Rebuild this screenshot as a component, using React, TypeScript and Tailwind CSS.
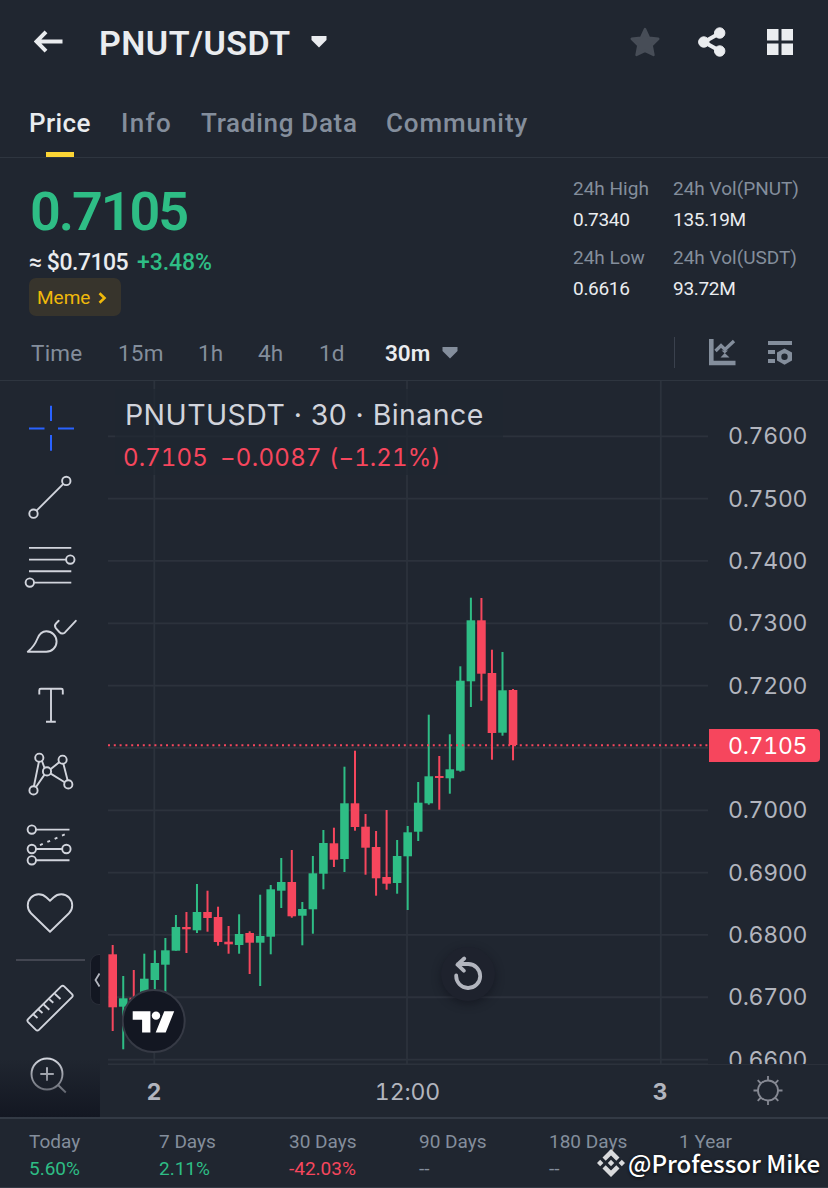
import { useState } from 'react';
import type { ReactNode } from 'react';

interface Candle {
  open: number;
  close: number;
  high: number;
  low: number;
  up: boolean;
}

// body top, body bottom, wick top, wick bottom (chart pixels)
const RAW: [number, number, number, number, 0 | 1][] = [
  [954.3, 1007.3, 945, 1031, 0],
  [998.3, 1006.7, 976, 1049.3, 1],
  [997.7, 1000, 970, 1004, 0],
  [978.7, 998, 953.7, 1004, 1],
  [963, 980, 950.3, 995, 1],
  [950.3, 964.7, 938, 995, 1],
  [927, 950.7, 915, 950.7, 1],
  [927, 929.3, 912, 953, 0],
  [912, 930.3, 884, 933, 1],
  [912, 918, 890.7, 931.7, 0],
  [917, 942, 906.7, 945.7, 0],
  [941.7, 944.3, 926, 953.7, 0],
  [934, 945, 914.3, 953.7, 1],
  [933, 942.7, 931.3, 974, 0],
  [936, 942.7, 894.7, 986, 1],
  [889.3, 936.7, 885, 954.3, 1],
  [882, 890.7, 858, 908, 1],
  [882, 916.3, 850, 917.7, 0],
  [909, 915.7, 902, 945.3, 1],
  [873.3, 909.3, 856, 933.7, 1],
  [843, 873.7, 830, 889.3, 1],
  [843.3, 859.7, 827.7, 867, 0],
  [803.3, 859, 766.7, 872, 1],
  [803.3, 827, 750.7, 830.7, 0],
  [826.7, 847.7, 814, 874.7, 0],
  [847, 878.3, 831, 895.7, 0],
  [877, 883.7, 810, 889.7, 0],
  [856, 883, 840, 893.7, 1],
  [832.3, 856.3, 826, 910, 1],
  [802.7, 831.7, 782, 841, 1],
  [776.3, 803.3, 714.7, 804.7, 1],
  [776, 778, 756, 809.7, 0],
  [769.3, 778.3, 734.3, 793.7, 1],
  [680.7, 770.7, 666.3, 771.7, 1],
  [620.3, 681.3, 597.7, 707, 1],
  [620.3, 673.7, 598, 700.7, 0],
  [673, 733, 649.7, 759.7, 0],
  [690.3, 732.7, 652, 735.7, 1],
  [690, 745, 689, 760.3, 0],
];

const CANDLES: Candle[] = RAW.map(([open, close, high, low, up]) => ({ open, close, high, low, up: up === 1 }));

const TABS = [
  { label: 'Price', style: 'w-[92px] tracking-[0.4px]' },
  { label: 'Info', style: 'w-[80px] tracking-[1.3px]' },
  { label: 'Trading Data', style: 'w-[185px] tracking-[0.7px]' },
  { label: 'Community', style: 'w-[150px] tracking-[0.9px]' },
];

const INTERVALS = [
  { label: 'Time', style: 'w-[87px]' },
  { label: '15m', style: 'w-[80px]' },
  { label: '1h', style: 'w-[60px]' },
  { label: '4h', style: 'w-[61px]' },
  { label: '1d', style: 'w-[66px]' },
];

const STATS = [
  { label: '24h High', value: '0.7340' },
  { label: '24h Vol(PNUT)', value: '135.19M' },
  { label: '24h Low', value: '0.6616' },
  { label: '24h Vol(USDT)', value: '93.72M' },
];

const PRICES = ['0.7600', '0.7500', '0.7400', '0.7300', '0.7200', '', '0.7000', '0.6900', '0.6800', '0.6700', '0.6600'];

const RETURNS = [
  { label: 'Today', value: '5.60%', color: 'text-[#2ebd85]' },
  { label: '7 Days', value: '2.11%', color: 'text-[#2ebd85]' },
  { label: '30 Days', value: '-42.03%', color: 'text-[#f6465d]' },
  { label: '90 Days', value: '--', color: 'text-[#848e9c]' },
  { label: '180 Days', value: '--', color: 'text-[#848e9c]' },
  { label: '1 Year', value: '--', color: 'text-[#848e9c]' },
];

function Tool({ children }: { children: ReactNode }) {
  return (
    <svg
      className="block h-[69.4px] w-[100px] shrink-0"
      viewBox="0 0 100 69.4"
      fill="none"
      stroke="#d1d4dc"
      strokeWidth={1.9}
      strokeLinejoin="round"
    >
      {children}
    </svg>
  );
}

function Toolbar() {
  return (
    <div className="relative flex w-[100px] shrink-0 flex-col overflow-hidden pt-[12.3px]">
      <Tool>
        <path stroke="#2962ff" strokeWidth={2} d="M51 12.7V28M51 42V57.7M29 35.4H44.5M58 35.4H74" />
      </Tool>
      <Tool>
        <circle cx="66.3" cy="17.9" r="4.2" />
        <circle cx="33.5" cy="50.7" r="4.2" />
        <path d="M36.5 47.7 63.3 20.9" />
      </Tool>
      <Tool>
        <path d="M29 15.9H71.3M29 27.6H66M29 39.2H71.3M34 50.6H71.3" />
        <circle cx="70.3" cy="27.6" r="4.2" />
        <circle cx="29.8" cy="50.6" r="4.2" />
      </Tool>
      <Tool>
        <path d="M27.8 50.8C33 46.5 35.7 42 37.5 37.5 39.3 33 42.3 30.2 46.3 30.2a10.3 10.3 0 0 1 0 20.6Z" />
        <path strokeLinecap="round" d="M58.7 19.8 56.2 22.2Q53.8 24.6 56 27.3L59.3 31Q62 33.8 65 31.4L75.8 19.8" />
      </Tool>
      <Tool>
        <path d="M39.3 23.4V19.3q0-1.5 1.5-1.5H61.3q1.5 0 1.5 1.5V23.4M51 17.8V50.8M46 50.8H55.8" />
      </Tool>
      <Tool>
        <path d="M38.9 21.8 33.9 46.3M42 21 44.6 28.3M44.5 34.6 36 47M50.5 29.2 59.2 22.2M63.4 23.8 67.6 40.2M50.7 33.6 64.7 42.2" />
        <circle cx="39.3" cy="17.7" r="4.1" />
        <circle cx="62.6" cy="19.7" r="4.1" />
        <circle cx="47" cy="31.4" r="4.1" />
        <circle cx="68.3" cy="44.4" r="4.1" />
        <circle cx="33.5" cy="50.4" r="4.1" />
      </Tool>
      <Tool>
        <path d="M36 19.6H69.5M36 39H62M36 50.3H69.5" />
        <path strokeDasharray="3 5" d="M40 35.2 67 23.4" />
        <circle cx="31.8" cy="19.6" r="4.2" />
        <circle cx="31.8" cy="39" r="4.2" />
        <circle cx="66.4" cy="39" r="4.2" />
        <circle cx="31.8" cy="50.3" r="4.2" />
      </Tool>
      <Tool>
        <path d="M50 21.8 46.5 18.5C42 14.2 35.3 14.2 31 18.5 26.7 23 26.7 30 31 34.3L50 52.7 69 34.3C73.3 30 73.3 23 69 18.5 64.7 14.2 58 14.2 53.5 18.5Z" />
      </Tool>
      <div className="mx-[15.5px] mt-[11px] mb-[11.5px] h-[2px] shrink-0 bg-[#434651]" />
      <Tool>
        <path d="M61.2 13.4Q62.7 12 64.2 13.4L72 21.2Q73.4 22.7 72 24.2L38.9 56.9Q37.4 58.3 35.9 56.9L28.1 49.1Q26.7 47.6 28.1 46.1Z" />
        <path d="M33.5 41.5 37.5 45M38.5 36.5 42.5 40M43.7 31.5 49.3 36.7M49.3 26.3 53.3 29.8M54.8 20.8 60.5 26" />
      </Tool>
      <Tool>
        <circle cx="47" cy="32" r="15.5" />
        <path d="M58.3 43.3 65.8 50.5M47 25.3V38.8M40.3 32H53.8" />
      </Tool>
      <div className="absolute bottom-0 left-0 h-[58px] w-full bg-gradient-to-b from-transparent to-[#131722]" />
      <div className="absolute top-[573px] right-0 flex h-[51px] w-[10px] items-center justify-end rounded-l-[9px] border border-r-0 border-[#2a2e39] bg-[#131722]">
        <svg className="h-4 w-[6px]" viewBox="0 0 6 16" fill="none" stroke="#b2b5be" strokeWidth={1.8}>
          <path d="M5.5 1.5 1.5 8 5.5 14.5" />
        </svg>
      </div>
    </div>
  );
}

function CandleChart() {
  return (
    <svg className="block h-[684px] w-[608px]" viewBox="100 381 608 684">
      <g stroke="#2c323c" strokeWidth={1.8}>
        {PRICES.map((_, i) => (
          <path key={i} d={`M108 ${436.3 + i * 62.33}H708`} />
        ))}
        <path d="M154.3 381V1064M407 381V1064M660.8 381V1064" />
        <path d="M108 1064.3H708" />
      </g>
      {CANDLES.map((c, i) => {
        const x = 112.7 + i * 10.535;
        return (
          <g key={i} fill={c.up ? '#2ebd85' : '#f6465d'}>
            <rect x={x - 1} y={c.high} width={2} height={c.low - c.high} />
            <rect x={x - 4.3} y={c.open} width={8.6} height={c.close - c.open} />
          </g>
        );
      })}
      <path d="M108 745.2H708" stroke="#f6465d" strokeWidth={2} strokeDasharray="2 3.8" />
    </svg>
  );
}

function PriceAxis() {
  return (
    <div className="relative h-[684px] w-[120px] overflow-hidden border-b border-[#2b303a] pt-[24.4px] text-[23px] tracking-[-0.25px] text-[#b2b5be] tabular-nums">
      {PRICES.map((price, i) => (
        <div key={i} className="flex h-[62.33px] items-center pl-[20px]">
          {price}
        </div>
      ))}
      <div className="absolute top-[348px] left-px flex h-[33px] w-[111px] items-center rounded-r-[4px] bg-[#f6465d] pt-px pl-[19px] text-white">
        0.7105
      </div>
    </div>
  );
}

export default function App() {
  const [tab, setTab] = useState('Price');

  return (
    <div className="h-[1188px] w-[828px] overflow-hidden bg-[#202630] font-['Roboto',sans-serif] text-[#eaecef]">
      <header className="flex h-[86px] items-center px-[34px] pb-[2px]">
        <svg className="h-[24px] w-[30px]" viewBox="0 0 30 24" fill="none" stroke="#eaecef" strokeWidth={4}>
          <path d="M12 1.8 2.5 11.5 12 21.2M2.5 11.5H28.5" />
        </svg>
        <h1 className="ml-[35px] w-[212px] pt-[3px] text-[34px] font-semibold tracking-[0.5px] whitespace-nowrap">PNUT/USDT</h1>
        <svg className="h-[12px] w-[16px]" viewBox="0 0 16 12" fill="#eaecef">
          <path d="M.5 0H15.5V4L8 11.5.5 4Z" />
        </svg>
        <svg className="ml-auto h-[30px] w-[30px]" viewBox="0 0 30 30" fill="#474d57" stroke="#474d57" strokeWidth={2.4} strokeLinejoin="round">
          <path d="m15 2 4 8.7 9.3 1.1-6.6 6.7 1.8 9.5L15 23.8 6.5 28l1.8-9.5L1.7 11.8 11 10.7Z" />
        </svg>
        <svg className="ml-[38px] h-[30px] w-[28px]" viewBox="0 0 28 30" fill="#eaecef" stroke="#eaecef">
          <path d="M22 6 6 15 22 24" fill="none" strokeWidth={4} />
          <circle cx="21.7" cy="6" r="5.2" />
          <circle cx="5.8" cy="15" r="5.2" />
          <circle cx="21.7" cy="24" r="5.2" />
        </svg>
        <svg className="mr-px ml-[41px] h-[26px] w-[26px]" viewBox="0 0 26 26" fill="#eaecef">
          <path d="M0 0h11.5v11.5H0zM14.5 0H26v11.5H14.5zM0 14.5h11.5V26H0zM14.5 14.5H26V26H14.5z" />
        </svg>
      </header>

      <nav className="flex h-[72px] border-b border-[#2e353f] pl-[29px] text-[26px] font-medium">
        {TABS.map(({ label, style }) => (
          <button key={label} onClick={() => setTab(label)} className="flex flex-col text-left whitespace-nowrap">
            <span className={`${style} block h-[66px] pt-[18px] leading-[38px] ${tab === label ? 'text-[#eaecef]' : 'text-[#848e9c]'}`}>
              {label}
            </span>
            {tab === label && <span className="ml-[17px] h-[5px] w-[28px] bg-[#fcd535]" />}
          </button>
        ))}
      </nav>

      <section className="flex h-[168px] pl-[29px]">
        <div className="w-[544px] pt-[22px]">
          <div className="h-[64px] pl-px text-[54px] leading-[63px] font-semibold tracking-[-2.1px] text-[#2ebd85]">0.7105</div>
          <div className="flex h-[34px] items-center pt-[4px] text-[23px] font-medium whitespace-nowrap">
            <span className="w-[108px] tracking-[-0.5px]">≈ $0.7105</span>
            <span className="tracking-[-0.1px] text-[#2ebd85]">+3.48%</span>
          </div>
          <div className="flex h-[38px] w-[92px] items-center rounded-[7px] bg-[#37342c] pt-px pl-[8px] text-[19px] text-[#f0b90b]">
            <span className="w-[61px] pt-px">Meme</span>
            <svg className="h-[12px] w-[9px]" viewBox="0 0 9 12" fill="none" stroke="#f0b90b" strokeWidth={2.6}>
              <path d="M1.5 1.2 6.5 6 1.5 10.8" />
            </svg>
          </div>
        </div>
        <div className="grid h-[139px] grid-cols-[100px_140px] grid-rows-[69px_69px] pt-[15px] text-[19px]">
          {STATS.map((stat) => (
            <div key={stat.label} className="whitespace-nowrap">
              <div className="h-[31px] leading-[31px] text-[#848e9c]">{stat.label}</div>
              <div className="h-[31px] leading-[31px] tracking-[-0.3px]">{stat.value}</div>
            </div>
          ))}
        </div>
      </section>

      <div className="flex h-[55px] items-center border-b border-[#2e353f] pl-[31px] text-[22.5px] text-[#848e9c]">
        {INTERVALS.map(({ label, style }) => (
          <span key={label} className={`${style} pt-px tracking-[0.2px]`}>{label}</span>
        ))}
        <span className="w-[57px] pt-px font-semibold text-[#eaecef]">30m</span>
        <svg className="h-[12px] w-[16px]" viewBox="0 0 16 12" fill="#848e9c">
          <path d="M.5 0H15.5V4L8 11.5.5 4Z" />
        </svg>
        <div className="mb-px ml-auto h-[31px] w-px bg-[#3a414d]" />
        <svg className="mb-px ml-[34px] h-[27px] w-[27px]" viewBox="0 0 27 27">
          <path d="M2.3 0V24H26.5" fill="none" stroke="#848e9c" strokeWidth={4.6} />
          <path d="M6.5 12 12 6.5 16 10.5 25 2" fill="none" stroke="#848e9c" strokeWidth={3.3} />
          <path d="M12.5 11.5H19L16 14.3 20.5 18.5H11.5L15.5 14.3Z" fill="#848e9c" />
        </svg>
        <svg className="mr-[35px] mb-[2px] ml-[32px] h-[27px] w-[25px]" viewBox="0 0 25 27" fill="#848e9c">
          <path d="M0 2H24V6H0zM0 11H7V15H0zM0 20H7V24H0z" />
          <path fillRule="evenodd" d="m16.5 9.5 7.5 4v8l-7.5 4.3L9 21.5v-8Zm0 5a3.2 3.2 0 1 0 0 6.4 3.2 3.2 0 0 0 0-6.4Z" />
        </svg>
      </div>

      <main className="flex h-[736px] font-['Inter',sans-serif]">
        <Toolbar />
        <div className="w-[728px]">
          <div className="relative flex">
            <CandleChart />
            <PriceAxis />
            <div className="absolute top-[8px] left-[15px] flex w-[388px] flex-col whitespace-nowrap">
              <div className="h-[50px] bg-[#202630]/70 pl-[10px] text-[28.5px] leading-[51px] tracking-[0.42px] text-[#d1d4dc]">
                PNUTUSDT · 30 · Binance
              </div>
              <div className="flex h-[36px] w-[333px] bg-[#202630]/70 pt-px pl-[8px] text-[24px] leading-[36px] tracking-[0.1px] text-[#f6465d] tabular-nums">
                <span className="w-[97px]">0.7105</span>
                <span className="w-[109px] tracking-[0.3px]">−0.0087</span>
                <span>(−1.21%)</span>
              </div>
            </div>
            <svg className="absolute top-[608px] left-[22px] h-[64px] w-[64px]" viewBox="122 989 64 64" fill="#fff">
              <circle cx="153.7" cy="1021" r="31" fill="#131722" stroke="#363a45" strokeWidth={2} />
              <path d="M132.7 1011.2h17.7v21.3h-8.3v-12.8h-9.4zM164.3 1011.2H174.2L165.7 1032.5H155.7Z" />
              <circle cx="156" cy="1015.6" r="4.2" />
            </svg>
            <button className="absolute top-[566px] left-[341px] flex h-[54px] w-[54px] items-center justify-center rounded-full bg-[#1e222d] shadow-[0_3px_8px_rgba(15,17,26,0.55)]">
              <svg className="h-[36px] w-[32px]" viewBox="0 0 32 36" fill="none" stroke="#b2b5be" strokeWidth={3.8} strokeLinecap="round">
                <path d="M4.2 19.5a12 12 0 1 0 12-11.5H6M12.2 2.5 5.5 8.7 11.8 14.7" strokeLinejoin="round" />
              </svg>
            </button>
          </div>
          <div className="flex h-[52px] items-center text-[23px] text-[#b2b5be]">
            <span className="w-[108px] pt-[2px] text-center font-bold">2</span>
            <span className="w-[399px] pt-[2px] text-center tracking-[-0.1px] tabular-nums">12:00</span>
            <span className="w-[106px] pt-[2px] text-center font-bold">3</span>
            <svg className="ml-[39px] h-[32px] w-[32px]" viewBox="-16 -15.5 32 32" fill="none" stroke="#868993" strokeWidth={1.8}>
              <circle r="10" />
              <path d="M0-10V-14.5M0 10V14.5M-10 0H-14.5M10 0H14.5M7-7 10.3-10.3M7 7 10.3 10.3M-7 7-10.3 10.3M-7-7-10.3-10.3" />
            </svg>
          </div>
        </div>
      </main>

      <footer className="relative flex h-[71px] border-t-2 border-b border-t-[#333a45] border-b-[#333a45] pt-[9px] pl-[29px] text-[19px]">
        {RETURNS.map((item) => (
          <div key={item.label} className="w-[130px] shrink-0 leading-[27px] whitespace-nowrap">
            <div className="text-[#848e9c]">{item.label}</div>
            <div className={item.color}>{item.value}</div>
          </div>
        ))}
        <div className="absolute top-[28px] left-[597px] flex h-[32px] items-center gap-[3px] font-['Noto_Sans_CJK_SC',sans-serif] text-[24.1px] font-medium whitespace-nowrap text-white [text-shadow:0_1px_3px_rgba(0,0,0,0.8)]">
          <svg className="h-[28px] w-[28px]" viewBox="0 0 28 28" fill="#d9dadc">
            <path d="m14 0 8.5 8.5-3.2 3.2L14 6.4 8.7 11.7 5.5 8.5ZM14 28l8.5-8.5-3.2-3.2L14 21.6 8.7 16.3 5.5 19.5ZM3.2 10.8 6.4 14 3.2 17.2 0 14ZM24.8 10.8 28 14 24.8 17.2 21.6 14ZM14 10.8 17.2 14 14 17.2 10.8 14Z" />
          </svg>
          <span>@Professor Mike</span>
        </div>
      </footer>
    </div>
  );
}
